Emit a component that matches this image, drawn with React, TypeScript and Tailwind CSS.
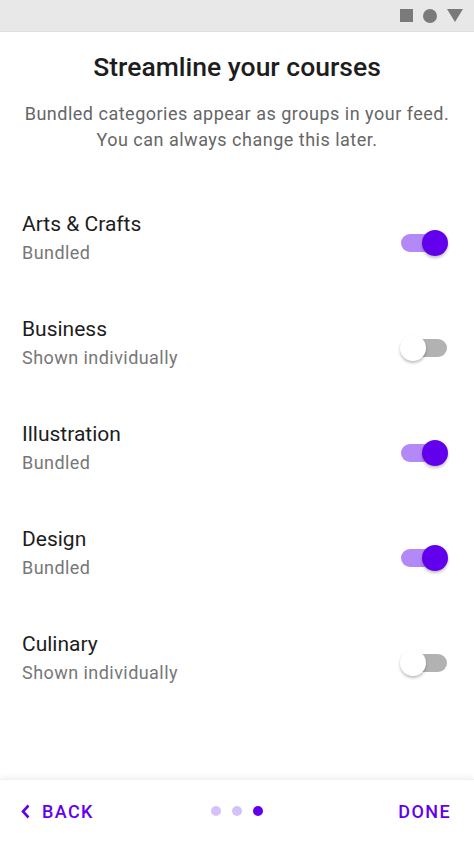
import { useState } from "react";

const categories = [
  { name: "Arts & Crafts", on: true },
  { name: "Business", on: false },
  { name: "Illustration", on: true },
  { name: "Design", on: true },
  { name: "Culinary", on: false },
];

function Toggle({ on, onClick }: { on: boolean; onClick: () => void }) {
  return (
    <button onClick={onClick} className="relative mt-[10px] w-[48px] h-[28px] flex items-center">
      <span
        className={`block w-[46px] h-[18px] rounded-full ${on ? "bg-[#b388f7]" : "bg-[#b2b2b2]"}`}
      />
      <span
        className={`absolute top-[1px] w-[26px] h-[26px] rounded-full shadow-[0_2px_3px_rgba(0,0,0,0.25)] ${
          on ? "left-[21px] bg-[#6200ee]" : "left-[-1px] bg-white"
        }`}
      />
    </button>
  );
}

export default function App() {
  const [items, setItems] = useState(categories);

  return (
    <div className="w-[474px] h-[842px] bg-white flex flex-col font-['Roboto',sans-serif] overflow-hidden">
      {/* barra de status */}
      <div className="h-[32px] bg-[#e8e8e8] border-b border-[#dedede] flex items-center justify-end gap-[10px] pr-[11px]">
        <span className="w-[13px] h-[13px] bg-[#7a7a7a]" />
        <span className="w-[14px] h-[14px] rounded-full bg-[#7a7a7a]" />
        <svg width="16" height="13" viewBox="0 0 16 13">
          <polygon points="0,0 16,0 8,13" fill="#7a7a7a" />
        </svg>
      </div>

      <main className="flex-1 flex flex-col">
        <h1 className="mt-[19px] text-[26.5px] leading-[32px] font-medium text-center text-[#1d1d1d]">
          Streamline your courses
        </h1>
        <p className="mt-[18px] text-[18px] leading-[26px] tracking-[0.5px] text-center text-[#666666]">
          Bundled categories appear as groups in your feed.
          <br />
          You can always change this later.
        </p>

        <div className="mt-[57px] flex flex-col gap-[50px] pl-[22px] pr-[25px]">
          {items.map((c, i) => (
            <div key={c.name} className="flex items-center justify-between">
              <div>
                <div className="text-[21px] leading-[28px] text-[#1d1d1d]">{c.name}</div>
                <div className="mt-[3px] text-[18px] leading-[24px] tracking-[0.45px] text-[#777777]">
                  {c.on ? "Bundled" : "Shown individually"}
                </div>
              </div>
              <Toggle
                on={c.on}
                onClick={() =>
                  setItems(items.map((x, j) => (j === i ? { ...x, on: !x.on } : x)))
                }
              />
            </div>
          ))}
        </div>
      </main>

      {/* rodapé com navegação */}
      <footer className="h-[63px] flex items-center px-[21px] shadow-[0_-2px_6px_rgba(0,0,0,0.06)] border-t border-[#f0f0f0]">
        <div className="flex-1">
          <button className="flex items-center gap-[12px] text-[#6200ee] text-[18px] font-medium tracking-[1.4px]">
            <svg width="9" height="15" viewBox="0 0 9 15">
              <polyline points="7.5,1.5 2,7.5 7.5,13.5" fill="none" stroke="#6200ee" strokeWidth="2.6" />
            </svg>
            BACK
          </button>
        </div>
        <div className="flex items-center gap-[11px]">
          <span className="w-[10px] h-[10px] rounded-full bg-[#d6c2fb]" />
          <span className="w-[10px] h-[10px] rounded-full bg-[#d6c2fb]" />
          <span className="w-[10px] h-[10px] rounded-full bg-[#6200ee]" />
        </div>
        <div className="flex-1 flex justify-end">
          <button className="text-[#6200ee] text-[18px] font-medium tracking-[1.4px] mr-[2px]">DONE</button>
        </div>
      </footer>
    </div>
  );
}
